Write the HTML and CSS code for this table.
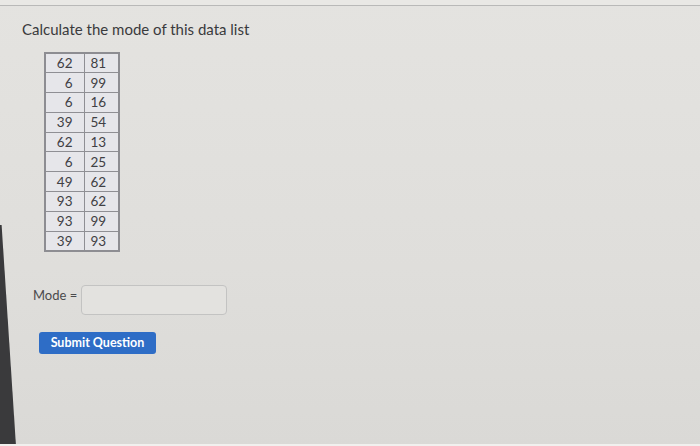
FILE: index.html
```html
<!DOCTYPE html>
<html>
<head>
<meta charset="utf-8">
<link rel="stylesheet" href="styles.css">
</head>
<body>
<div class="screen">
  <div class="topbar"></div>
  <main class="content">
    <h1 class="question">Calculate the mode of this data list</h1>
    <table class="data">
      <tr><td>62</td><td>81</td></tr>
      <tr><td>6</td><td>99</td></tr>
      <tr><td>6</td><td>16</td></tr>
      <tr><td>39</td><td>54</td></tr>
      <tr><td>62</td><td>13</td></tr>
      <tr><td>6</td><td>25</td></tr>
      <tr><td>49</td><td>62</td></tr>
      <tr><td>93</td><td>62</td></tr>
      <tr><td>93</td><td>99</td></tr>
      <tr><td>39</td><td>93</td></tr>
    </table>
    <div class="answer">
      <label class="label">Mode =</label>
      <input class="field" type="text">
    </div>
    <button class="submit">Submit Question</button>
  </main>
  <div class="edge"></div>
  <div class="bottom"></div>
</div>
</body>
</html>
```
FILE: styles.css
```css
* { box-sizing: border-box; }
html, body { margin: 0; padding: 0; }
body {
  width: 700px;
  height: 446px;
  overflow: hidden;
  font-family: Lato, "Open Sans", sans-serif;
  color: #3d3d3f;
}
.screen {
  position: relative;
  width: 700px;
  height: 446px;
  background: linear-gradient(180deg, #e4e3e0 0%, #dfdedb 60%, #dad9d6 100%);
  display: flex;
  flex-direction: column;
}
.topbar {
  height: 6px;
  background: #e9e8e5;
  border-bottom: 1px solid #b9b9b8;
}
.content {
  flex: 1;
  padding: 13px 0 0 22px;
  display: flex;
  flex-direction: column;
  align-items: flex-start;
}
.question {
  margin: 0;
  font-size: 15px;
  font-weight: 400;
  color: #3a3a3c;
  line-height: 20px;
}
.data {
  margin: 13px 0 0 22px;
  border-collapse: collapse;
  border: 2px solid #8d8d92;
  background: #e6e6ea;
  font-size: 13.5px;
  color: #404044;
}
.data td {
  border: 1px solid #8f8f94;
  height: 19.8px;
  padding: 0 11px 0 6px;
  text-align: right;
  line-height: 18px;
}
.data td:first-child { width: 39px; }
.data td:last-child { width: 35px; padding-right: 12px; }
.answer {
  margin: 33px 0 0 11px;
  display: flex;
  align-items: flex-start;
  gap: 4px;
}
.label {
  font-size: 13px;
  color: #4a4a4c;
  margin-top: 2px;
}
.field {
  width: 146px;
  height: 30px;
  border: 1px solid #c3c3c2;
  border-radius: 4px;
  background: #e3e2df;
  margin: 0;
}
.submit {
  margin: 17px 0 0 17px;
  width: 117px;
  height: 22px;
  border: none;
  border-radius: 3px;
  background: #2e6dc6;
  color: #fff;
  font-family: Lato, "Open Sans", sans-serif;
  font-weight: 700;
  font-size: 12.5px;
  padding: 0;
}
.edge {
  position: absolute;
  left: 0;
  top: 225px;
  width: 16px;
  height: 221px;
  background: #3a3a3c;
  clip-path: polygon(0 0, 10% 0, 100% 100%, 0 100%);
}
.bottom {
  position: absolute;
  left: 0;
  right: 0;
  bottom: 0;
  height: 2px;
  background: #f1f0ee;
}
```
